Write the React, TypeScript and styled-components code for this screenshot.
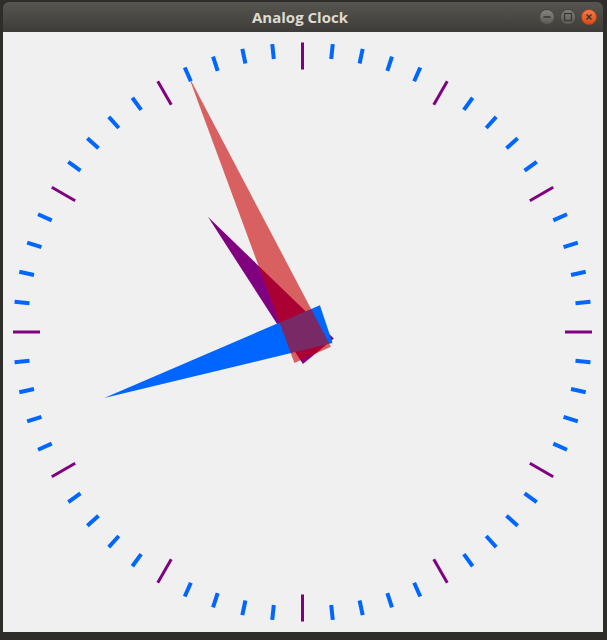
import React from "react";
import styled, { createGlobalStyle } from "styled-components";

const GlobalStyle = createGlobalStyle`
  html, body {
    margin: 0;
    padding: 0;
    background: #2e2d2a;
  }
  body {
    width: 607px;
    height: 640px;
    overflow: hidden;
    font-family: "Open Sans", "DejaVu Sans", sans-serif;
  }
`;

const TICK_PURPLE = "#800080";
const TICK_BLUE = "#0066ff";

// hands: length in px from centre, angle in degrees clockwise from 12
const hands = [
  { name: "hour", length: 149, angle: -39.4, fill: "#800080", opacity: 1 },
  { name: "second", length: 209, angle: -108.4, fill: "#0066ff", opacity: 1 },
  { name: "minute", length: 281, angle: -24.0, fill: "#c80000", opacity: 0.6 },
];

function ClockFace() {
  const ticks = Array.from({ length: 60 }, (_, i) => i);
  return (
    <ClockSvg viewBox="-300 -300 600 600" width={600} height={600}>
      <g transform="translate(-0.5 0)">
        {hands.map((h) => (
          <polygon
            key={h.name}
            points={`-20,25 20,25 0,${-h.length}`}
            fill={h.fill}
            fillOpacity={h.opacity}
            transform={`rotate(${h.angle})`}
          />
        ))}
        {ticks.map((i) => {
          const hour = i % 5 === 0;
          return (
            <line
              key={i}
              x1={0}
              x2={0}
              y1={hour ? -262.5 : -274.5}
              y2={hour ? -289.5 : -289.5}
              stroke={hour ? TICK_PURPLE : TICK_BLUE}
              strokeWidth={hour ? 3 : 4}
              transform={`rotate(${i * 6})`}
            />
          );
        })}
      </g>
    </ClockSvg>
  );
}

function App() {
  return (
    <>
      <GlobalStyle />
      <Window>
        <TitleBar>
          <span />
          <Title>Analog Clock</Title>
          <Controls>
            <WinButton aria-label="minimize">
              <svg width="10" height="10" viewBox="0 0 10 10">
                <line x1="1.5" y1="5" x2="8.5" y2="5" stroke="#3a3935" strokeWidth="1.6" />
              </svg>
            </WinButton>
            <WinButton aria-label="maximize">
              <svg width="10" height="10" viewBox="0 0 10 10">
                <rect x="1.5" y="1.5" width="7" height="7" fill="none" stroke="#3a3935" strokeWidth="1.4" />
              </svg>
            </WinButton>
            <WinButton aria-label="close" close>
              <svg width="10" height="10" viewBox="0 0 10 10">
                <path d="M2.5 2.5 L7.5 7.5 M7.5 2.5 L2.5 7.5" stroke="#3a3935" strokeWidth="1.6" />
              </svg>
            </WinButton>
          </Controls>
        </TitleBar>
        <Content>
          <ClockFace />
        </Content>
      </Window>
    </>
  );
}

const Window = styled.div`
  margin: 2px 0 0 3px;
  width: 600px;
  display: flex;
  flex-direction: column;
`;

const TitleBar = styled.div`
  height: 30px;
  border-radius: 6px 6px 0 0;
  background: linear-gradient(#57554f, #3d3c38);
  display: grid;
  grid-template-columns: 1fr auto 1fr;
  align-items: center;
  padding-right: 6px;
`;

const Title = styled.span`
  color: #dfdbd2;
  font-size: 15px;
  font-weight: 700;
  line-height: 30px;
`;

const Controls = styled.div`
  display: flex;
  justify-content: flex-end;
  gap: 5px;
`;

const WinButton = styled.div<{ close?: boolean }>`
  width: 16px;
  height: 16px;
  border-radius: 50%;
  display: flex;
  align-items: center;
  justify-content: center;
  box-sizing: border-box;
  border: 1px solid ${(p) => (p.close ? "#b8431a" : "#47463f")};
  background: ${(p) =>
    p.close
      ? "linear-gradient(#f47b4a, #df4a16)"
      : "linear-gradient(#86847e, #5c5a55)"};
`;

const Content = styled.div`
  width: 600px;
  height: 600px;
  background: #f0f0f0;
`;

const ClockSvg = styled.svg`
  display: block;
`;

export default App;
